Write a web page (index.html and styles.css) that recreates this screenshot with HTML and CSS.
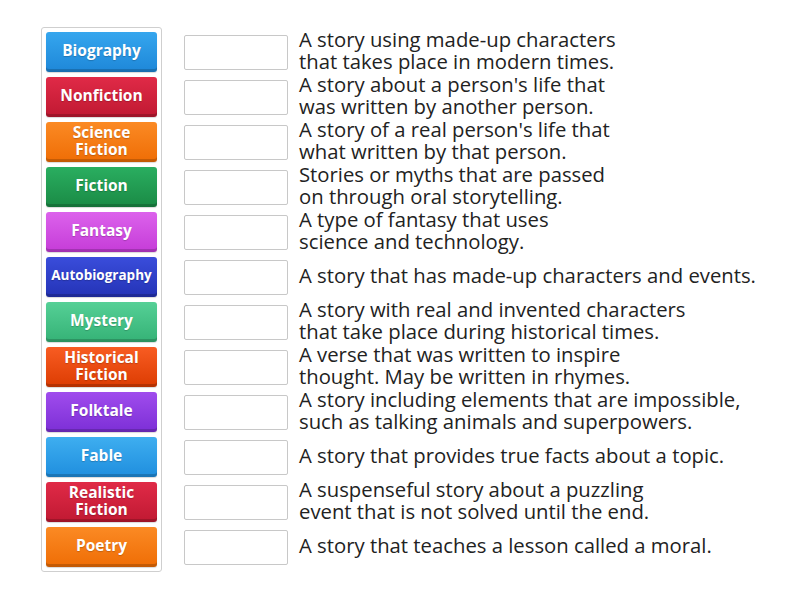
FILE: index.html
```html
<!DOCTYPE html>
<html lang="en">
<head>
    <meta charset="UTF-8">
    <title>Genres - Match up</title>
    <link rel="stylesheet" href="styles.css">
</head>
<body>
    <div class="board">
        <div class="tray">
            <div class="tile blue">Biography</div>
            <div class="tile red">Nonfiction</div>
            <div class="tile orange two">Science Fiction</div>
            <div class="tile green">Fiction</div>
            <div class="tile pink">Fantasy</div>
            <div class="tile navy small">Autobiography</div>
            <div class="tile mint">Mystery</div>
            <div class="tile flame two">Historical Fiction</div>
            <div class="tile purple">Folktale</div>
            <div class="tile sky">Fable</div>
            <div class="tile red two">Realistic Fiction</div>
            <div class="tile orange">Poetry</div>
        </div>

        <div class="rows">
            <div class="row"><div class="slot"></div><p class="clue">A story using made-up characters<br>that takes place in modern times.</p></div>
            <div class="row"><div class="slot"></div><p class="clue">A story about a person's life that<br>was written by another person.</p></div>
            <div class="row"><div class="slot"></div><p class="clue">A story of a real person's life that<br>what written by that person.</p></div>
            <div class="row"><div class="slot"></div><p class="clue">Stories or myths that are passed<br>on through oral storytelling.</p></div>
            <div class="row"><div class="slot"></div><p class="clue">A type of fantasy that uses<br>science and technology.</p></div>
            <div class="row"><div class="slot"></div><p class="clue">A story that has made-up characters and events.</p></div>
            <div class="row"><div class="slot"></div><p class="clue">A story with real and invented characters<br>that take place during historical times.</p></div>
            <div class="row"><div class="slot"></div><p class="clue">A verse that was written to inspire<br>thought. May be written in rhymes.</p></div>
            <div class="row"><div class="slot"></div><p class="clue">A story including elements that are impossible,<br>such as talking animals and superpowers.</p></div>
            <div class="row"><div class="slot"></div><p class="clue">A story that provides true facts about a topic.</p></div>
            <div class="row"><div class="slot"></div><p class="clue">A suspenseful story about a puzzling<br>event that is not solved until the end.</p></div>
            <div class="row"><div class="slot"></div><p class="clue">A story that teaches a lesson called a moral.</p></div>
        </div>
    </div>
</body>
</html>
```

FILE: styles.css
```css
* {
    box-sizing: border-box;
    margin: 0;
    padding: 0;
}

body {
    background-color: white;
    font-family: "Open Sans", Arial, sans-serif;
    color: #222;
}

.board {
    display: flex;
    align-items: flex-start;
    padding: 27px 0 0 41px;
}

.tray {
    display: flex;
    flex-direction: column;
    gap: 5px;
    width: 121px;
    padding: 4px;
    border: 1px solid #cfcfcf;
    border-radius: 3px;
}

.tile {
    height: 40px;
    width: 111px;
    display: flex;
    align-items: center;
    justify-content: center;
    text-align: center;
    color: white;
    font-weight: bold;
    font-size: 15.5px;
    line-height: 17px;
    padding: 0 4px 3px;
    border-radius: 3px;
    box-shadow: inset 0 -3px 0 rgba(0, 0, 0, 0.18), 0 1px 1px rgba(0, 0, 0, 0.15);
    text-shadow: 0 1px 1px rgba(0, 0, 0, 0.2);
}

.tile.two {
    padding: 0 10px 3px;
}

.tile.small {
    font-size: 13.5px;
    padding: 0 2px 3px;
}

.blue { background: linear-gradient(#35a6ee, #1e87d8); }
.red { background: linear-gradient(#e02a47, #c01932); }
.orange { background: linear-gradient(#fb8a24, #ef6d05); }
.green { background: linear-gradient(#2aae60, #1a8a45); }
.pink { background: linear-gradient(#dc62ec, #c53cd8); }
.navy { background: linear-gradient(#3a4ddb, #2433b6); }
.mint { background: linear-gradient(#55d096, #35b276); }
.flame { background: linear-gradient(#f85c22, #dc3c02); }
.purple { background: linear-gradient(#a04ced, #7c2fd6); }
.sky { background: linear-gradient(#3eaef0, #1f8ede); }

.rows {
    display: flex;
    flex-direction: column;
    gap: 5px;
    margin: 5px 0 0 22px;
}

.row {
    display: flex;
    align-items: center;
    height: 40px;
}

.slot {
    width: 104px;
    height: 35px;
    border: 1px solid #c8c8c8;
    border-radius: 2px;
    background: white;
    flex-shrink: 0;
}

.clue {
    margin: 0 0 4px 11px;
    font-size: 20.3px;
    line-height: 22px;
    white-space: nowrap;
}
```
